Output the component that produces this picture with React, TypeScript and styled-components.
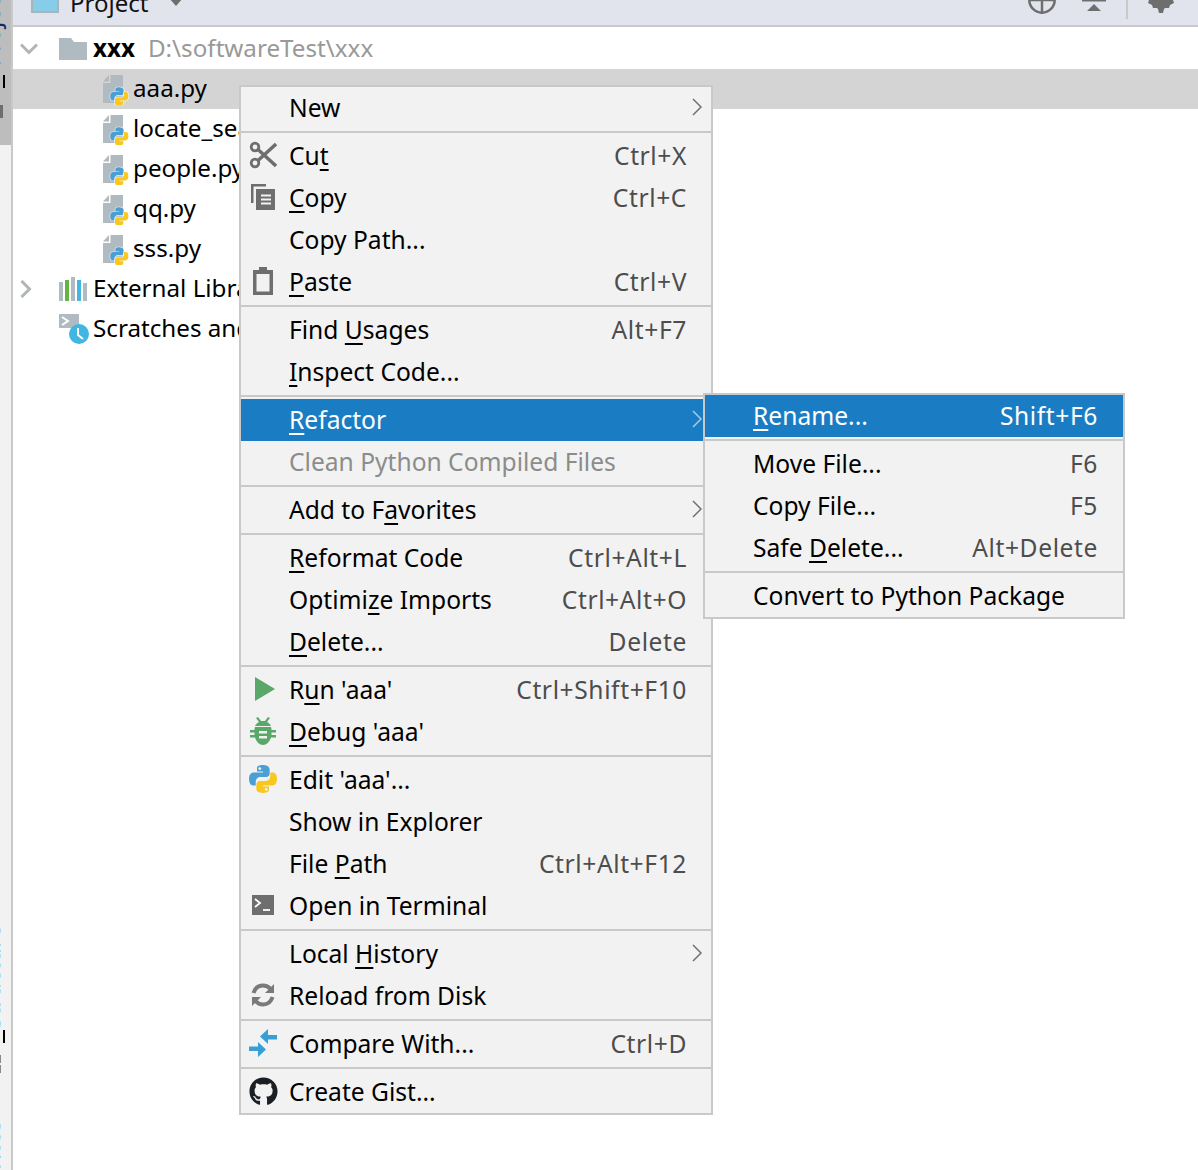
import React from 'react';
import styled, { createGlobalStyle } from 'styled-components';
import { FaGithub } from 'react-icons/fa';

const GlobalStyle = createGlobalStyle`
  html, body {
    margin: 0;
    padding: 0;
    background: #fff;
  }
  body {
    font-family: "Noto Sans", "Open Sans", "Liberation Sans", sans-serif;
  }
`;

const PY_BLUE =
  'M13.8 1C8.6 1 8.4 3.2 8.4 4.4V7h5.6v1H5.2C2.6 8 1 10.2 1 14c0 3.9 1.500 6 3.800 6h2.400v-3.400c0-2.400 2-4.400 4.400-4.400h5.400c1.900 0 3.200-1.500 3.200-3.400V4.600C19.800 2.400 17.600 1 13.800 1z';
const PY_YELLOW =
  'M14.2 27c5.200 0 5.400-2.200 5.400-3.400V21H14v-1h8.800c2.600 0 4.200-2.200 4.200-6 0-3.900-1.500-6-3.800-6h-2.400v3.400c0 2.400-2 4.400-4.400 4.400h-5.400c-1.900 0-3.200 1.500-3.200 3.400v4.200c0 2.200 2.200 3.600 6 3.600z';

const PythonLogo = ({ size }: { size: number }) => (
  <svg width={size} height={size} viewBox="0 0 28 28">
    <path fill="#4b9fd5" d={PY_BLUE} />
    <path fill="#f8c81e" d={PY_YELLOW} />
    <circle cx="11" cy="4.300" r="1.300" fill="#f2f2f2" />
    <circle cx="17" cy="23.700" r="1.300" fill="#f2f2f2" />
  </svg>
);

const PyFileIcon = () => (
  <svg width="28" height="32" viewBox="0 0 28 32">
    <path fill="#afbac1" d="M8.500 2H21v28H1V10h7.500z" />
    <path fill="#afbac1" d="M1 8.500 7 2v6.500z" />
    <g transform="translate(7.500 13.500) scale(0.7)" stroke="#fff" strokeOpacity="0.7" strokeWidth="2" style={{ paintOrder: 'stroke' }}>
      <path fill="#4b9fd5" d={PY_BLUE} />
      <path fill="#f8c81e" d={PY_YELLOW} />
    </g>
  </svg>
);

const FolderIcon = () => (
  <svg width="28" height="22" viewBox="0 0 28 22">
    <path fill="#afbac1" d="M0 0h12l3 4h13v18H0z" />
  </svg>
);

const LibraryIcon = () => (
  <svg width="30" height="24" viewBox="0 0 30 24">
    <rect x="0" y="5" width="4" height="19" fill="#afbac1" />
    <rect x="6" y="3" width="4" height="21" fill="#62b543" />
    <rect x="12" y="0" width="4" height="24" fill="#afbac1" />
    <rect x="18" y="3" width="4" height="21" fill="#40b6e0" />
    <rect x="24" y="6" width="4" height="18" fill="#afbac1" />
  </svg>
);

const ScratchIcon = () => (
  <svg width="32" height="32" viewBox="0 0 32 32">
    <path fill="#afbac1" d="M0 1h20v14H0z" />
    <path fill="none" stroke="#fff" strokeWidth="2" d="M3 4l6 4-6 4" />
    <circle cx="20" cy="21" r="10" fill="#40b6e0" />
    <path fill="none" stroke="#fff" strokeWidth="2" d="M19 15v7l5 4" />
  </svg>
);

const ScissorsIcon = () => (
  <svg width="28" height="28" viewBox="0 0 28 28">
    <circle cx="6" cy="6" r="3.800" fill="none" stroke="#6e6e6e" strokeWidth="2.800" />
    <circle cx="6" cy="22" r="3.800" fill="none" stroke="#6e6e6e" strokeWidth="2.800" />
    <path fill="none" stroke="#6e6e6e" strokeWidth="3.400" d="M9 8.500 27 25M9 19.500 27 3" />
  </svg>
);

const CopyIcon = () => (
  <svg width="26" height="28" viewBox="0 0 26 28">
    <path fill="#6e6e6e" d="M1 1h15v2.500H3.500V20H1z" />
    <path fill="#6e6e6e" fillRule="evenodd" d="M6 6h19v21H6zM11 11.500v2h10v-2zM11 15.500v2h10v-2zM11 19.500v2h10v-2z" />
  </svg>
);

const PasteIcon = () => (
  <svg width="22" height="28" viewBox="0 0 22 28">
    <path fill="#6e6e6e" fillRule="evenodd" d="M7 0h8v3h6v25H1V3h6zM4.500 7v17.500h13V7z" />
  </svg>
);

const RunIcon = () => (
  <svg width="26" height="24" viewBox="0 0 26 24">
    <path fill="#59a869" d="M5 0l20 12L5 24z" />
  </svg>
);

const DebugIcon = () => (
  <svg width="26" height="28" viewBox="0 0 26 28">
    <path fill="#59a869" d="M6 1l2-1 3 4h4l3-4 2 1-3 4c2 1 3 2 4 4H5c1-2 2-3 4-4z" />
    <path
      fill="#59a869"
      fillRule="evenodd"
      d="M5 10h16c.4 1 .5 2 .5 3H26v2.500h-4.500V18H26v2.500h-5C19.500 25 16.500 28 13 28s-6.500-3-8-7.500H0V18h4.500v-2.500H0V13h4.500c0-1 .1-2 .5-3zM9 14v2.500h8V14zM9 19v2.500h8V19z"
    />
  </svg>
);

const TerminalIcon = () => (
  <svg width="22" height="20" viewBox="0 0 22 20">
    <path fill="#6e6e6e" d="M0 0h22v20H0z" />
    <path fill="none" stroke="#fff" strokeWidth="1.800" d="M3 4l5 4-5 4" />
    <path fill="none" stroke="#fff" strokeWidth="1.800" d="M11 15h7" />
  </svg>
);

const ReloadIcon = () => (
  <svg width="26" height="24" viewBox="0 0 26 24">
    <path fill="none" stroke="#7a7a7a" strokeWidth="4" d="M3.500 10C5 5 9 2.500 13 2.500c3 0 5.500 1.200 7.500 3.500" />
    <path fill="#7a7a7a" d="M24 1v9h-9z" />
    <path fill="none" stroke="#7a7a7a" strokeWidth="4" d="M22.500 14c-1.500 5-5.500 7.500-9.500 7.500-3 0-5.500-1.200-7.500-3.500" />
    <path fill="#7a7a7a" d="M2 23v-9h9z" />
  </svg>
);

const CompareIcon = () => (
  <svg width="28" height="28" viewBox="0 0 28 28">
    <path fill="#389fd6" d="M19 0v6h9v4.500h-9V15l-8-7.500z" />
    <path fill="#389fd6" d="M9 28v-6H0v-4.500h9V13l8 7.500z" />
  </svg>
);

const Chevron = ({ tone }: { tone: string }) => (
  <svg width="10" height="18" viewBox="0 0 10 18">
    <path fill="none" stroke={tone} strokeWidth="1.500" d="M1 1l8 8-8 8" />
  </svg>
);

const Page = styled.div`
  position: relative;
  display: flex;
  width: 1198px;
  height: 1170px;
  overflow: hidden;
  background: #fff;
`;

const SideStrip = styled.div`
  position: relative;
  flex: 0 0 11px;
  height: 100%;
  overflow: hidden;
  background: #f2f2f2;
  border-right: 2px solid #c9c9c9;
`;

const ActiveTab = styled.div`
  height: 145px;
  background: #bdbdbd;
`;

const StripLabel = styled.span<{ $top: number; $color: string }>`
  position: absolute;
  top: ${(p) => p.$top}px;
  left: -21px;
  writing-mode: vertical-rl;
  transform: rotate(180deg);
  font-size: 24px;
  line-height: 24px;
  white-space: nowrap;
  color: ${(p) => p.$color};
`;

const StripMark = styled.i<{ $top: number; $left: number; $w: number; $h: number; $color: string }>`
  position: absolute;
  top: ${(p) => p.$top}px;
  left: ${(p) => p.$left}px;
  width: ${(p) => p.$w}px;
  height: ${(p) => p.$h}px;
  background: ${(p) => p.$color};
`;

const Main = styled.div`
  flex: 1;
  display: flex;
  flex-direction: column;
  min-width: 0;
`;

const Header = styled.header`
  flex: 0 0 25px;
  display: flex;
  align-items: flex-end;
  overflow: hidden;
  background: #e1e4ec;
  border-bottom: 2px solid #c9c9c9;
`;

const HeaderTitle = styled.div`
  display: flex;
  align-items: center;
  gap: 11px;
  margin: 0 0 8px 18px;
  height: 30px;
  font-size: 24px;
  color: #111;
`;

const ProjectGlyph = styled.span`
  width: 28px;
  height: 16px;
  margin-top: 6px;
  box-sizing: border-box;
  background: #87cdea;
  border: 2px solid #aab4bb;
  border-top: 0;
`;

const DropGlyph = styled.svg`
  margin-left: 10px;
`;

const HeaderTools = styled.div`
  margin: 0 24px 0 auto;
  display: flex;
  align-items: flex-start;
  gap: 20px;
  height: 25px;
`;

const TargetGlyph = styled.svg`
  margin-right: 6px;
`;

const ToolDivider = styled.span`
  width: 2px;
  height: 19px;
  background: #c9c9c9;
`;

const Tree = styled.div`
  display: flex;
  flex-direction: column;
  padding-top: 2px;
`;

const TreeRow = styled.div<{ $selected?: boolean; $indent: number }>`
  display: flex;
  align-items: center;
  box-sizing: border-box;
  height: 40px;
  padding: 0 0 4px ${(p) => p.$indent}px;
  background: ${(p) => (p.$selected ? '#d4d4d4' : 'transparent')};
  font-size: 24.2px;
  color: #000;
  white-space: nowrap;
`;

const TreeToggle = styled.span`
  flex: 0 0 46px;
  display: flex;
  align-items: center;
  margin-top: 4px;
  padding-left: 7px;
  box-sizing: border-box;
`;

const TreeIcon = styled.span<{ $width: number }>`
  flex: 0 0 ${(p) => p.$width}px;
  display: flex;
  align-items: center;
  margin-top: 4px;
`;

const RootName = styled.b`
  margin-right: 13px;
`;

const RootPath = styled.span`
  color: #999;
`;

const Menu = styled.div<{ $left: number; $top: number; $width: number }>`
  position: absolute;
  left: ${(p) => p.$left}px;
  top: ${(p) => p.$top}px;
  width: ${(p) => p.$width}px;
  box-sizing: border-box;
  background: #f2f2f2;
  border: 2px solid #c9c9c9;
  font-size: 24.6px;
`;

const MenuRow = styled.div<{ $active?: boolean; $disabled?: boolean; $pad: number }>`
  position: relative;
  display: flex;
  align-items: center;
  justify-content: space-between;
  box-sizing: border-box;
  height: 42px;
  padding: 0 ${(p) => p.$pad}px 2px 48px;
  white-space: nowrap;
  background: ${(p) => (p.$active ? '#1a7dc4' : 'transparent')};
  color: ${(p) => (p.$active ? '#fff' : p.$disabled ? '#8c8c8c' : '#000')};
`;

const MenuIcon = styled.span`
  position: absolute;
  left: 0;
  top: 0;
  width: 44px;
  height: 40px;
  display: flex;
  align-items: center;
  justify-content: center;
`;

const Shortcut = styled.span<{ $active?: boolean }>`
  letter-spacing: 0.6px;
  color: ${(p) => (p.$active ? '#fff' : '#4d4d4d')};
`;

const SubArrow = styled.span`
  position: absolute;
  right: 9px;
  top: 11px;
  display: flex;
`;

const Separator = styled.div`
  height: 2px;
  margin: 2px 0;
  background: #c9c9c9;
`;

const Mnemonic = styled.span`
  text-decoration: underline;
  text-decoration-thickness: 2px;
  text-underline-offset: 4px;
`;

type Item = {
  label: React.ReactNode;
  shortcut?: string;
  icon?: React.ReactNode;
  arrow?: boolean;
  active?: boolean;
  disabled?: boolean;
};

const u = (s: string) => <Mnemonic>{s}</Mnemonic>;

const mainMenu: Item[][] = [
  [{ label: 'New', arrow: true }],
  [
    { label: <>Cu{u('t')}</>, shortcut: 'Ctrl+X', icon: <ScissorsIcon /> },
    { label: <>{u('C')}opy</>, shortcut: 'Ctrl+C', icon: <CopyIcon /> },
    { label: 'Copy Path...' },
    { label: <>{u('P')}aste</>, shortcut: 'Ctrl+V', icon: <PasteIcon /> },
  ],
  [
    { label: <>Find {u('U')}sages</>, shortcut: 'Alt+F7' },
    { label: <>{u('I')}nspect Code...</> },
  ],
  [
    { label: <>{u('R')}efactor</>, arrow: true, active: true },
    { label: 'Clean Python Compiled Files', disabled: true },
  ],
  [{ label: <>Add to F{u('a')}vorites</>, arrow: true }],
  [
    { label: <>{u('R')}eformat Code</>, shortcut: 'Ctrl+Alt+L' },
    { label: <>Optimi{u('z')}e Imports</>, shortcut: 'Ctrl+Alt+O' },
    { label: <>{u('D')}elete...</>, shortcut: 'Delete' },
  ],
  [
    { label: <>R{u('u')}n 'aaa'</>, shortcut: 'Ctrl+Shift+F10', icon: <RunIcon /> },
    { label: <>{u('D')}ebug 'aaa'</>, icon: <DebugIcon /> },
  ],
  [
    { label: "Edit 'aaa'...", icon: <PythonLogo size={30} /> },
    { label: 'Show in Explorer' },
    { label: <>File {u('P')}ath</>, shortcut: 'Ctrl+Alt+F12' },
    { label: 'Open in Terminal', icon: <TerminalIcon /> },
  ],
  [
    { label: <>Local {u('H')}istory</>, arrow: true },
    { label: 'Reload from Disk', icon: <ReloadIcon /> },
  ],
  [{ label: 'Compare With...', shortcut: 'Ctrl+D', icon: <CompareIcon /> }],
  [{ label: 'Create Gist...', icon: <FaGithub size={29} color="#1b1f23" /> }],
];

const subMenu: Item[][] = [
  [{ label: <>{u('R')}ename...</>, shortcut: 'Shift+F6', active: true }],
  [
    { label: 'Move File...', shortcut: 'F6' },
    { label: 'Copy File...', shortcut: 'F5' },
    { label: <>Safe {u('D')}elete...</>, shortcut: 'Alt+Delete' },
  ],
  [{ label: 'Convert to Python Package' }],
];

const files = ['aaa.py', 'locate_search.py', 'people.py', 'qq.py', 'sss.py'];

const renderMenu = (groups: Item[][], pad: number) =>
  groups.map((group, g) => (
    <React.Fragment key={g}>
      {g > 0 && <Separator />}
      {group.map((item, i) => (
        <MenuRow key={i} $active={item.active} $disabled={item.disabled} $pad={pad}>
          {item.icon && <MenuIcon>{item.icon}</MenuIcon>}
          <span>{item.label}</span>
          {item.shortcut && <Shortcut $active={item.active}>{item.shortcut}</Shortcut>}
          {item.arrow && (
            <SubArrow>
              <Chevron tone={item.active ? '#a9cde8' : '#6e6e6e'} />
            </SubArrow>
          )}
        </MenuRow>
      ))}
    </React.Fragment>
  ));

const App = () => (
  <Page>
    <GlobalStyle />
    <SideStrip>
      <ActiveTab />
      <StripLabel $top={-12} $color="#0b2a66">Project</StripLabel>
      <StripMark $top={75} $left={3} $w={2} $h={13} $color="#000" />
      <StripMark $top={105} $left={0} $w={3} $h={13} $color="#6e6e6e" />
      <StripLabel $top={925} $color="#0033b3">Structure</StripLabel>
      <StripMark $top={1030} $left={3} $w={2} $h={13} $color="#000" />
      <StripMark $top={1055} $left={0} $w={1} $h={8} $color="#8a8a8a" />
      <StripMark $top={1065} $left={0} $w={1} $h={8} $color="#8a8a8a" />
      <StripLabel $top={1120} $color="#0033b3">Favorites</StripLabel>
    </SideStrip>
    <Main>
      <Header>
        <HeaderTitle>
          <ProjectGlyph />
          Project
          <DropGlyph width="14" height="8" viewBox="0 0 14 8">
            <path fill="#6e6e6e" d="M0 0h14L7 8z" />
          </DropGlyph>
        </HeaderTitle>
        <HeaderTools>
          <TargetGlyph width="28" height="14" viewBox="0 0 28 14">
            <g fill="none" stroke="#6e6e6e" strokeWidth="2.500">
              <circle cx="14" cy="0" r="12.700" />
              <path d="M14 -6v20M1 0h26" />
            </g>
          </TargetGlyph>
          <svg width="24" height="12" viewBox="0 0 24 12">
            <path fill="#6e6e6e" d="M0 0h24v1.500H0zM12 4l7 7H5z" />
          </svg>
          <ToolDivider />
          <svg width="26" height="13" viewBox="0 0 26 13">
            <path fill="#6e6e6e" d="M1 0h24l1 3-4 2-1 3-4 0-1 1-1 4h-4l-1-4-1-1-4 0-1-3-4-2z" />
          </svg>
        </HeaderTools>
      </Header>
      <Tree>
        <TreeRow $indent={0}>
          <TreeToggle>
            <svg width="18" height="12" viewBox="0 0 18 12">
              <path fill="none" stroke="#afb5b8" strokeWidth="3" d="M1 1.500l8 8 8-8" />
            </svg>
          </TreeToggle>
          <TreeIcon $width={34}><FolderIcon /></TreeIcon>
          <RootName>xxx</RootName>
          <RootPath>D:\softwareTest\xxx</RootPath>
        </TreeRow>
        {files.map((name, i) => (
          <TreeRow key={name} $indent={89} $selected={i === 0}>
            <TreeIcon $width={31}><PyFileIcon /></TreeIcon>
            {name}
          </TreeRow>
        ))}
        <TreeRow $indent={0}>
          <TreeToggle>
            <svg width="12" height="18" viewBox="0 0 12 18">
              <path fill="none" stroke="#afb5b8" strokeWidth="3" d="M1.500 1l8 8-8 8" />
            </svg>
          </TreeToggle>
          <TreeIcon $width={34}><LibraryIcon /></TreeIcon>
          External Libraries
        </TreeRow>
        <TreeRow $indent={46}>
          <TreeIcon $width={34}><ScratchIcon /></TreeIcon>
          Scratches and Consoles
        </TreeRow>
      </Tree>
    </Main>
    <Menu $left={239} $top={85} $width={474}>
      {renderMenu(mainMenu, 24)}
    </Menu>
    <Menu $left={703} $top={393} $width={422}>
      {renderMenu(subMenu, 25)}
    </Menu>
  </Page>
);

export default App;
